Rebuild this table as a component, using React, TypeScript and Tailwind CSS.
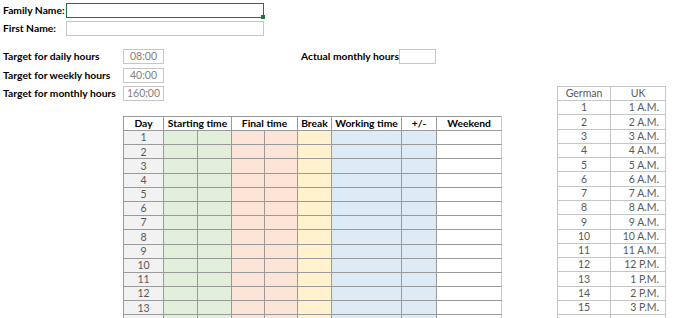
const dayCols = [
  { w: 40, bg: "bg-[#f2f2f2]" },
  { w: 34, bg: "bg-[#e2efda]" },
  { w: 34, bg: "bg-[#e2efda]" },
  { w: 33, bg: "bg-[#fce4d6]" },
  { w: 33, bg: "bg-[#fce4d6]" },
  { w: 34, bg: "bg-[#fff2cc]" },
  { w: 70, bg: "bg-[#ddebf7]" },
  { w: 35, bg: "bg-[#ddebf7]" },
  { w: 65, bg: "bg-white" },
];

// last entry is the row cut off by the window
const hours = [
  "1 A.M.", "2 A.M.", "3 A.M.", "4 A.M.", "5 A.M.", "6 A.M.", "7 A.M.", "8 A.M.",
  "9 A.M.", "10 A.M.", "11 A.M.", "12 P.M.", "1 P.M.", "2 P.M.", "3 P.M.", "",
];

const targets = [
  { label: "Target for daily hours", value: "08:00" },
  { label: "Target for weekly hours", value: "40:00" },
  { label: "Target for monthly hours", value: "160:00" },
];

function TimeTable() {
  return (
    <table className="mt-[15px] ml-[123px] table-fixed border-collapse text-[10.3px] leading-none">
      <colgroup>
        {dayCols.map((c, i) => (
          <col key={i} style={{ width: c.w }} />
        ))}
      </colgroup>
      <thead>
        <tr className="h-[14px] font-bold">
          <th className="border border-[#9a9a9a] p-0 whitespace-nowrap">Day</th>
          <th colSpan={2} className="border border-[#9a9a9a] p-0 whitespace-nowrap">Starting time</th>
          <th colSpan={2} className="border border-[#9a9a9a] p-0 whitespace-nowrap">Final time</th>
          <th className="border border-[#9a9a9a] p-0 whitespace-nowrap">Break</th>
          <th className="border border-[#9a9a9a] p-0 whitespace-nowrap">Working time</th>
          <th className="border border-[#9a9a9a] p-0 whitespace-nowrap">+/-</th>
          <th className="border border-[#9a9a9a] border-r-[#c8c8c8] p-0 whitespace-nowrap">Weekend</th>
        </tr>
      </thead>
      <tbody>
        {Array.from({ length: 14 }, (_, r) => (
          <tr key={r} className="h-[14.2px]">
            {dayCols.map((c, i) => (
              <td
                key={i}
                className={`${c.bg} border border-[#9a9a9a] p-0 text-center text-[10.5px] text-[#595959] ${i === 8 ? "border-r-[#c8c8c8]" : ""}`}
              >
                {i === 0 && r < 13 ? r + 1 : ""}
              </td>
            ))}
          </tr>
        ))}
      </tbody>
    </table>
  );
}

function HourTable() {
  return (
    <table className="mt-[37px] table-fixed border-collapse text-[10.5px] leading-none text-[#595959]">
      <colgroup>
        <col style={{ width: 53 }} />
        <col style={{ width: 55 }} />
      </colgroup>
      <thead>
        <tr className="h-[14px]">
          <th className="border border-[#c6c6c6] p-0 font-normal">German</th>
          <th className="border border-[#c6c6c6] p-0 font-normal">UK</th>
        </tr>
      </thead>
      <tbody>
        {hours.map((h, i) => (
          <tr key={i} className="h-[14.07px]">
            <td className="border border-[#c6c6c6] p-0 text-center">{h ? i + 1 : ""}</td>
            <td className="border border-[#c6c6c6] p-0 pr-[6px] text-right whitespace-nowrap">{h}</td>
          </tr>
        ))}
      </tbody>
    </table>
  );
}

export default function App() {
  return (
    <div className="h-[318px] w-[680px] overflow-hidden bg-white font-[Lato,sans-serif] text-[10.3px] leading-none text-black">
      <div className="mt-[3px] flex h-[15px] items-center">
        <span className="w-[66px] pl-[3px] font-bold whitespace-nowrap">Family Name:</span>
        <div className="relative h-[15px] w-[198px] border border-[#217346]">
          <span className="absolute -right-[2px] -bottom-[2px] h-[4px] w-[4px] bg-[#217346]" />
        </div>
      </div>
      <div className="mt-[3px] flex h-[15px] items-center">
        <span className="w-[66px] pl-[3px] font-bold whitespace-nowrap">First Name:</span>
        <div className="h-[15px] w-[198px] border border-[#c6c6c6]" />
      </div>

      <div className="mt-[13px] flex">
        <div className="w-[557px]">
          {targets.map((t, i) => (
            <div key={t.label} className={`flex h-[15px] items-center ${i > 0 ? "mt-[3.5px]" : ""}`}>
              <span className="w-[123px] pl-[3px] font-bold whitespace-nowrap">{t.label}</span>
              <div className="flex h-[15px] w-[41px] items-center justify-center border border-[#c6c6c6] text-[10.5px] text-[#7f7f7f]">
                {t.value}
              </div>
              {i === 0 && (
                <>
                  <span className="ml-[137px] w-[98px] font-bold whitespace-nowrap">Actual monthly hours</span>
                  <div className="h-[15px] w-[37px] border border-[#c6c6c6]" />
                </>
              )}
            </div>
          ))}
          <TimeTable />
        </div>
        <HourTable />
      </div>
    </div>
  );
}
